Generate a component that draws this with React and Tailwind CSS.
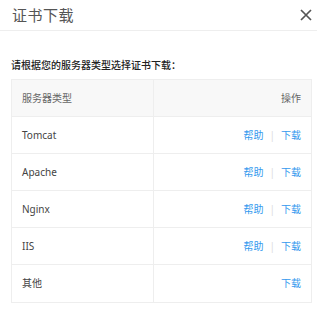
import React from 'react';

const servers = [
  { name: 'Tomcat', help: true },
  { name: 'Apache', help: true },
  { name: 'Nginx', help: true },
  { name: 'IIS', help: true },
  { name: '其他', help: false },
];

export default function App() {
  return (
    <div
      className="w-[317px] h-[320px] bg-white overflow-hidden"
      style={{ fontFamily: '"Noto Sans", "Noto Sans CJK SC", sans-serif' }}
    >
      {/* Header */}
      <div className="h-[31px] flex items-center justify-between pl-[12px] pr-[5px] border-b border-[#eeeeee]">
        <span className="text-[15px] text-[#555] tracking-[0.5px]">证书下载</span>
        <svg width="12" height="12" viewBox="0 0 12 12">
          <path d="M1 1 L11 11 M11 1 L1 11" stroke="#555" strokeWidth="1.7" />
        </svg>
      </div>

      {/* Body */}
      <div className="pl-[11px] pr-[5px] pt-[27px]">
        <p className="text-[10px] leading-[14px] text-[#222] font-medium mb-[7px]">请根据您的服务器类型选择证书下载：</p>

        <div className="border border-[#eeeeee] text-[10px]">
          <div className="flex h-[37px] bg-[#f8f8f8] border-b border-[#eeeeee] text-[#666]">
            <div className="w-[142px] border-r border-[#eeeeee] flex items-center pl-[10px]">服务器类型</div>
            <div className="flex-1 flex items-center justify-end pr-[10px]">操作</div>
          </div>
          {servers.map((s, i) => (
            <div
              key={s.name}
              className={`flex h-[37px] ${i < servers.length - 1 ? 'border-b border-[#eeeeee]' : ''}`}
            >
              <div className="w-[142px] border-r border-[#eeeeee] flex items-center pl-[10px] text-[#444]">{s.name}</div>
              <div className="flex-1 flex items-center justify-end pr-[10px] text-[#3399ee]">
                {s.help && (
                  <>
                    <span>帮助</span>
                    <span className="mx-[6px] text-[#dddddd]">|</span>
                  </>
                )}
                <span>下载</span>
              </div>
            </div>
          ))}
        </div>

        <div className="mt-[17px] h-[20px] border border-[#eeeeee] border-b-0"></div>
      </div>
    </div>
  );
}
